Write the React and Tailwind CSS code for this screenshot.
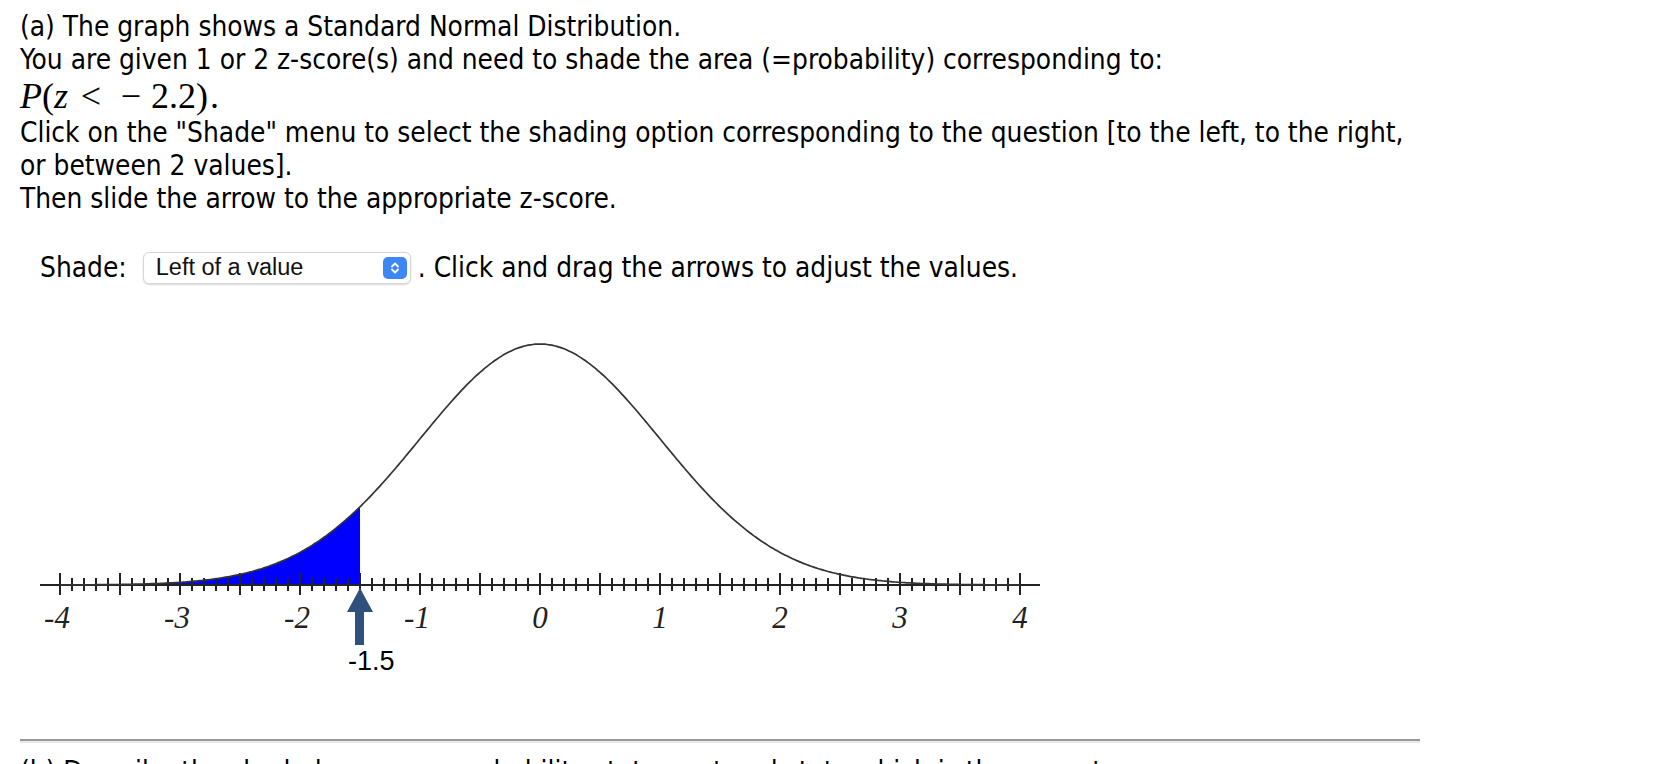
import React from "react"

// standard normal density
const pdf = (z) => Math.exp(-(z * z) / 2) / Math.sqrt(2 * Math.PI)

// graph geometry (svg-local pixels)
const X0 = 520
const UNIT = 120
const AXIS_Y = 285
const SCALE_Y = 604
const CUT = -1.5

const px = (z) => X0 + UNIT * z
const py = (z) => AXIS_Y - SCALE_Y * pdf(z)

const curvePoints = () => {
    const pts = []
    for (let z = -4; z <= 4.0001; z += 0.02) {
        pts.push(`${px(z).toFixed(1)},${py(z).toFixed(1)}`)
    }
    return pts.join(" ")
}

const shadePoints = () => {
    const pts = [`${px(-4)},${AXIS_Y}`]
    for (let z = -4; z <= CUT + 0.0001; z += 0.02) {
        pts.push(`${px(z).toFixed(1)},${py(z).toFixed(1)}`)
    }
    pts.push(`${px(CUT)},${py(CUT).toFixed(1)}`)
    pts.push(`${px(CUT)},${AXIS_Y}`)
    return pts.join(" ")
}

const NormalGraph = () => {
    const ticks = []
    for (let i = -40; i <= 40; i++) {
        const x = X0 + 12 * i
        const major = i % 5 === 0
        ticks.push(
            <line
                key={i}
                x1={x}
                x2={x}
                y1={major ? 273 : 278}
                y2={major ? 295 : 291}
                stroke="#222"
                strokeWidth="2"
            />
        )
    }

    const labels = [-4, -3, -2, -1, 0, 1, 2, 3, 4]

    return (
        <svg width="1100" height="400" viewBox="0 0 1100 400" className="block mt-[16px]">
            <polygon points={shadePoints()} fill="#0000ff" />
            <line x1="20" x2="1020" y1={AXIS_Y} y2={AXIS_Y} stroke="#222" strokeWidth="2" />
            {ticks}
            <polyline points={curvePoints()} fill="none" stroke="#333" strokeWidth="1.7" />
            {labels.map((n) => (
                <text
                    key={n}
                    x={px(n) - (n < 0 ? 3 : 0)}
                    y="328"
                    textAnchor="middle"
                    fontFamily="'Liberation Serif', serif"
                    fontStyle="italic"
                    fontSize="31"
                    fill="#222"
                >
                    {n < 0 ? `-${Math.abs(n)}` : n}
                </text>
            ))}

            <polygon points="340,288 353,312 344,312 344,345 335,345 335,312 327,312" fill="#2f507c" />
            <text x="328" y="370" fontFamily="'Liberation Sans', Arial, sans-serif" fontSize="27" fill="#000">
                -1.5
            </text>
        </svg>
    )
}

const ShadeSelect = () => (
    <div className="flex items-center justify-between w-[268px] h-[32px] bg-white border border-[#d6d6d6] rounded-[6px] shadow-[0_1px_2px_rgba(0,0,0,0.15)] pl-[12px] pr-[3px]">
        <span className="font-['Liberation_Sans',Arial,sans-serif] text-[23.5px] leading-none text-[#111]">
            Left of a value
        </span>
        <span className="flex items-center justify-center w-[24px] h-[22px] rounded-[5px] bg-[#3d86f6]">
            <svg width="10" height="14" viewBox="0 0 10 14">
                <path d="M2 5.5 L5 2.5 L8 5.5" fill="none" stroke="white" strokeWidth="1.8" strokeLinecap="round" strokeLinejoin="round" />
                <path d="M2 8.5 L5 11.5 L8 8.5" fill="none" stroke="white" strokeWidth="1.8" strokeLinecap="round" strokeLinejoin="round" />
            </svg>
        </span>
    </div>
)

export default function App() {
    return (
        <div className="h-[764px] overflow-hidden bg-white text-black font-['DejaVu_Sans_Condensed','DejaVu_Sans',sans-serif]">
            <div className="pl-[20px] pt-[10px]">
                {/* question text */}
                <div className="text-[27.8px] leading-[33px] whitespace-nowrap">
                    <p>(a) The graph shows a Standard Normal Distribution.</p>
                    <p>You are given 1 or 2 z-score(s) and need to shade the area (=probability) corresponding to:</p>
                    <p className="h-[40px] flex items-center font-['Liberation_Serif',serif] text-[36px]">
                        <span className="italic">P</span>
                        <span>(</span>
                        <span className="italic">z</span>
                        <span className="inline-block w-[28px] text-center ml-[9px]">&lt;</span>
                        <span className="inline-block w-[28px] text-center ml-[12px]">−</span>
                        <span className="ml-[6px]">2.2</span>
                        <span>)</span>
                        <span className="ml-[2px]">.</span>
                    </p>
                    <p>
                        Click on the "Shade" menu to select the shading option corresponding to the question [to the left, to the right,
                        <br />
                        or between 2 values].
                    </p>
                    <p>Then slide the arrow to the appropriate z-score.</p>
                </div>

                {/* shade picker row */}
                <div className="flex items-center h-[32px] mt-[37px] pl-[20px] text-[27.8px] whitespace-nowrap">
                    <span>Shade:</span>
                    <div className="ml-[16px]">
                        <ShadeSelect />
                    </div>
                    <span className="ml-[7px]">. Click and drag the arrows to adjust the values.</span>
                </div>

                <NormalGraph />

                <div className="w-[1400px] mt-[39px] border-t-2 border-b-2 border-t-[#999] border-b-[#e8e8e8]" />

                <p className="mt-[12px] text-[27.8px] leading-[33px] whitespace-nowrap">
                    (b) Describe the shaded area as a probability statement and state which is the correct answer.
                </p>
            </div>
        </div>
    )
}
